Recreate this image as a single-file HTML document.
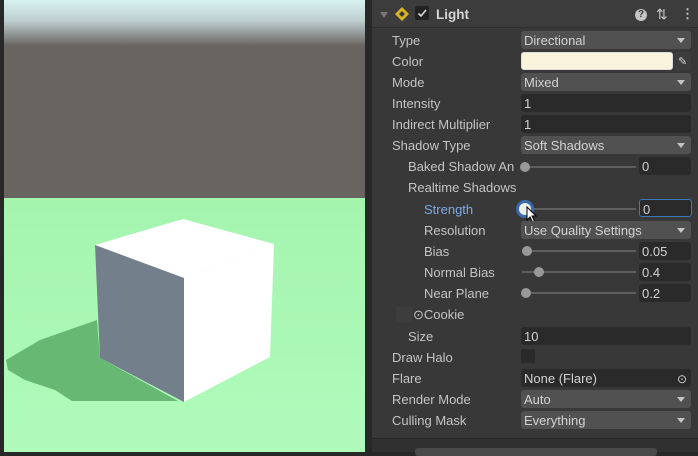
<!DOCTYPE html>
<html><head><meta charset="utf-8"><style>
*{margin:0;padding:0;box-sizing:border-box}
body{width:698px;height:452px;overflow:hidden;background:#282828;font-family:"Liberation Sans",sans-serif;position:relative}
.scene{position:absolute;left:4px;top:0;width:361px;height:452px;overflow:hidden}
.panel{position:absolute;left:372px;top:0;width:326px;height:452px;background:#383838;color:#c4c4c4;font-size:13px}
.lbl{position:absolute;white-space:nowrap;margin-top:1px}
.fld{position:absolute;height:18px;border-radius:3px;padding-left:3px;line-height:20px;color:#d2d2d2;white-space:nowrap}
.dd{background:#515151}
.tx{background:#2a2a2a}
.arr{position:absolute;right:6px;top:7px;width:0;height:0;border-left:4px solid transparent;border-right:4px solid transparent;border-top:5px solid #c4c4c4}
.track{position:absolute;height:2px;background:#5e5e5e}
.knob{position:absolute;width:10px;height:10px;border-radius:50%;background:#999}
</style></head><body>
<div class="scene">
<svg width="361" height="452" viewBox="4 0 361 452">
<defs><linearGradient id="sky" x1="0" y1="0" x2="0" y2="1">
<stop offset="0" stop-color="#d8f2f2"/><stop offset="0.45" stop-color="#bfcfd0"/><stop offset="1" stop-color="#686460"/></linearGradient>
<linearGradient id="gr" x1="0" y1="0" x2="0" y2="1"><stop offset="0" stop-color="#a4f4ae"/><stop offset="1" stop-color="#b0fbbc"/></linearGradient></defs>
<rect x="0" y="0" width="380" height="46" fill="url(#sky)"/>
<rect x="0" y="46" width="380" height="152" fill="#686460"/>
<rect x="0" y="198" width="380" height="260" fill="url(#gr)"/>
<polygon points="6,360 40,340 97,320 100,358 178,401 72,401 55,390 25,380 8,370" fill="#66b872"/>
<polygon points="95,245 183,219 274,244 184,278" fill="#ffffff"/>
<polygon points="95,245 184,278 184,402 100,358" fill="#747f8c"/>
<polygon points="184,278 274,244 270,357 184,402" fill="#ffffff"/>
</svg>
</div>
<div class="panel">
<div style="position:absolute;left:0;top:0;width:326px;height:28px;background:#3c3c3c;border-bottom:1px solid #2e2e2e"></div>
<div style="position:absolute;left:8px;top:12px;width:0;height:0;border-left:4px solid transparent;border-right:4px solid transparent;border-top:6px solid #777"></div>
<svg style="position:absolute;left:22px;top:6px" width="16" height="16" viewBox="0 0 16 16"><path d="M8 1 L15 8 L8 15 L1 8Z" fill="#d8b520"/><path d="M5 8 L8 5 L11 8 L8 11Z" fill="#383838"/></svg>
<div style="position:absolute;left:43px;top:6px;width:14px;height:14px;background:#222;border-radius:2px"></div>
<svg style="position:absolute;left:44px;top:7px" width="12" height="12"><path d="M2.5 6.5 L5 9 L10 3" stroke="#ddd" stroke-width="1.6" fill="none"/></svg>
<div class="lbl" style="left:64px;top:6px;font-weight:bold;color:#d6d6d6;font-size:13.5px">Light</div>
<div style="position:absolute;left:263px;top:9px;width:12px;height:12px;border-radius:50%;background:#c4c4c4;color:#383838;font-size:10px;font-weight:bold;text-align:center;line-height:12px">?</div>
<div class="lbl" style="left:284px;top:5px;color:#c4c4c4;font-size:14px">⇅</div>
<div class="lbl" style="left:309px;top:5px;color:#c4c4c4;font-weight:bold">⋮</div>

<div class="lbl" style="left:20px;top:32px">Type</div>
<div class="fld dd" style="left:149px;top:31px;width:170px">Directional<div class="arr"></div></div>
<div class="lbl" style="left:20px;top:53px">Color</div>
<div class="fld" style="left:149px;top:52px;width:152px;background:#fbf4dc;border:1px solid #ddd"></div>
<div class="fld dd" style="left:302px;top:52px;width:17px;background:#3d3d3d;font-size:11px;padding-left:4px">✎</div>
<div class="lbl" style="left:20px;top:74px">Mode</div>
<div class="fld dd" style="left:149px;top:73px;width:170px">Mixed<div class="arr"></div></div>
<div class="lbl" style="left:20px;top:95px">Intensity</div>
<div class="fld tx" style="left:149px;top:94px;width:170px">1</div>
<div class="lbl" style="left:20px;top:116px">Indirect Multiplier</div>
<div class="fld tx" style="left:149px;top:115px;width:170px">1</div>
<div class="lbl" style="left:20px;top:137px">Shadow Type</div>
<div class="fld dd" style="left:149px;top:136px;width:170px">Soft Shadows<div class="arr"></div></div>

<div class="lbl" style="left:36px;top:158px">Baked Shadow An</div>
<div class="track" style="left:150px;top:166px;width:114px"></div><div class="knob" style="left:148px;top:162px"></div>
<div class="fld tx" style="left:267px;top:157px;width:52px">0</div>
<div class="lbl" style="left:36px;top:179px">Realtime Shadows</div>
<div class="lbl" style="left:52px;top:201px;color:#7ea8e8">Strength</div>
<div class="track" style="left:155px;top:208px;width:109px"></div>
<div class="knob" style="left:147px;top:203px;width:12px;height:12px;background:#eee;box-shadow:0 0 0 3px #3a6aae"></div>
<div class="fld tx" style="left:267px;top:199px;width:53px;border:1px solid #3a79bb">0</div>
<svg style="position:absolute;left:154px;top:206px" width="12" height="18"><path d="M1 1 L1 14 L4 11 L7 17 L9 16 L6 10 L10 10Z" fill="#fff" stroke="#000" stroke-width="1"/></svg>
<div class="lbl" style="left:52px;top:222px">Resolution</div>
<div class="fld dd" style="left:149px;top:221px;width:170px">Use Quality Settings<div class="arr"></div></div>
<div class="lbl" style="left:52px;top:243px">Bias</div>
<div class="track" style="left:150px;top:250px;width:114px"></div><div class="knob" style="left:150px;top:246px"></div>
<div class="fld tx" style="left:267px;top:242px;width:52px">0.05</div>
<div class="lbl" style="left:52px;top:264px">Normal Bias</div>
<div class="track" style="left:150px;top:271px;width:114px"></div><div class="knob" style="left:162px;top:267px"></div>
<div class="fld tx" style="left:267px;top:263px;width:52px">0.4</div>
<div class="lbl" style="left:52px;top:285px">Near Plane</div>
<div class="track" style="left:150px;top:292px;width:114px"></div><div class="knob" style="left:149px;top:288px"></div>
<div class="fld tx" style="left:267px;top:284px;width:52px">0.2</div>

<div style="position:absolute;left:24px;top:307px;width:16px;height:16px;background:#3d3d3d"></div>
<div class="lbl" style="left:41px;top:306px">⊙Cookie</div>
<div class="lbl" style="left:36px;top:328px">Size</div>
<div class="fld tx" style="left:149px;top:327px;width:170px">10</div>
<div class="lbl" style="left:20px;top:349px">Draw Halo</div>
<div style="position:absolute;left:149px;top:349px;width:14px;height:14px;background:#2a2a2a;border-radius:2px"></div>
<div class="lbl" style="left:20px;top:370px">Flare</div>
<div class="fld tx" style="left:149px;top:369px;width:170px">None (Flare)<span style="position:absolute;right:4px;top:0;font-size:12px">⊙</span></div>
<div class="lbl" style="left:20px;top:391px">Render Mode</div>
<div class="fld dd" style="left:149px;top:390px;width:170px">Auto<div class="arr"></div></div>
<div class="lbl" style="left:20px;top:412px">Culling Mask</div>
<div class="fld dd" style="left:149px;top:411px;width:170px">Everything<div class="arr"></div></div>
<div style="position:absolute;left:0;top:438px;width:326px;height:14px;background:#303030;border-top:1px solid #262626"></div>
<div style="position:absolute;left:43px;top:448px;width:242px;height:8px;background:#4a4a4a;border-radius:3px"></div>
</div>
</body></html>
